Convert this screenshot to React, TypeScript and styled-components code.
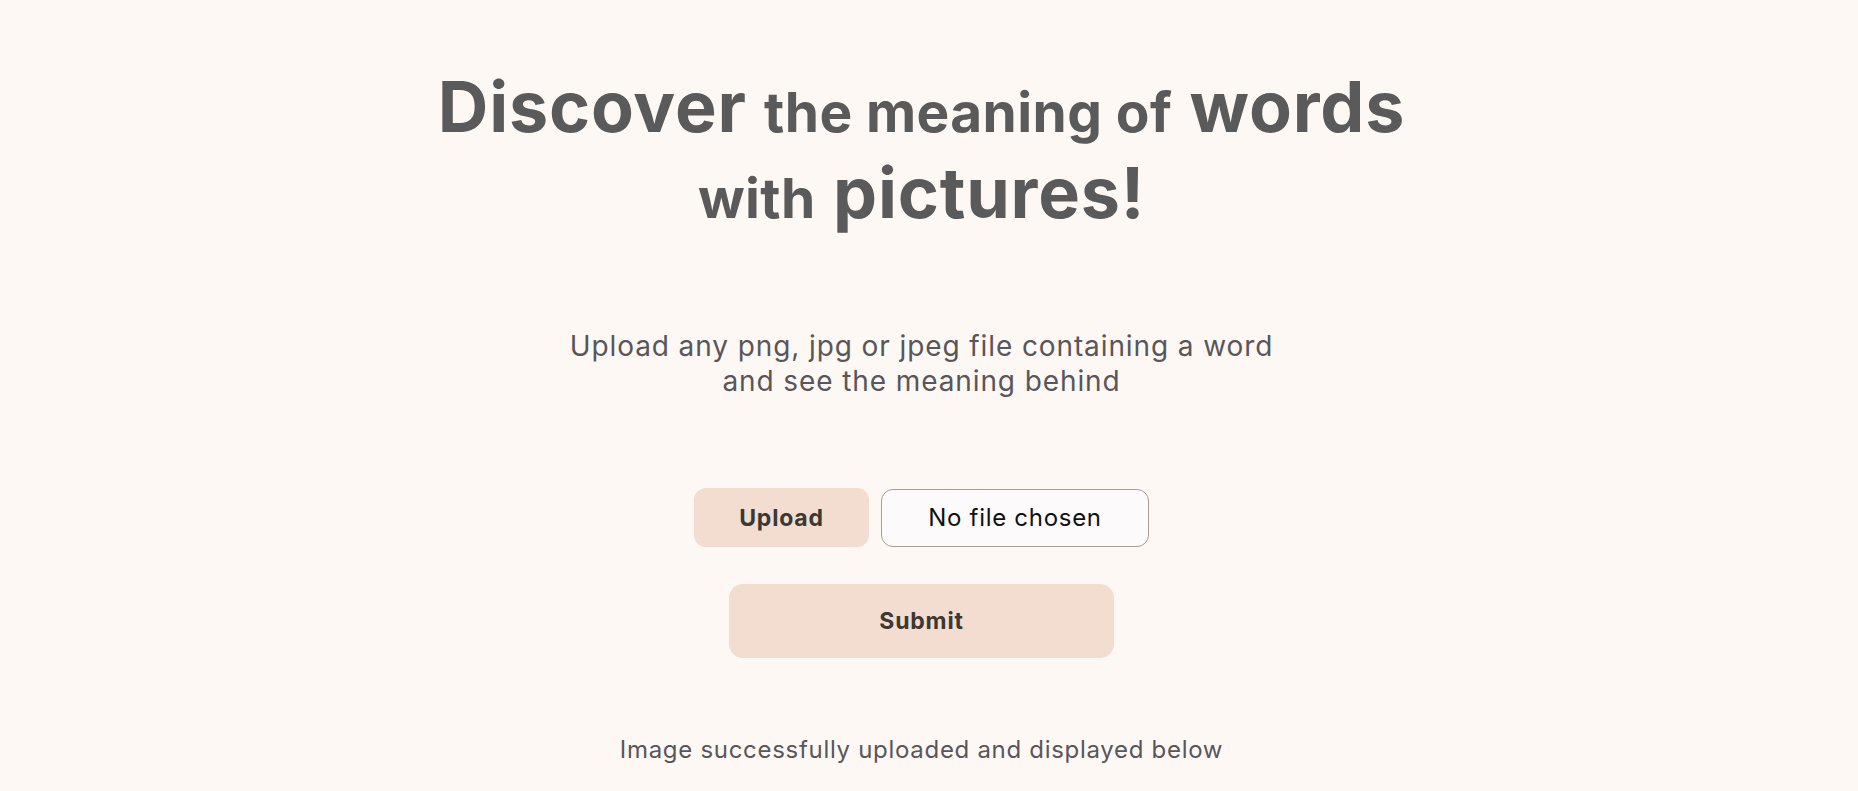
import React, { useState } from "react";
import styled, { createGlobalStyle } from "styled-components";

const GlobalStyle = createGlobalStyle`
  html, body {
    margin: 0;
    padding: 0;
    background: #fef8f4;
  }
  body {
    font-family: Inter, "Noto Sans", "DejaVu Sans", sans-serif;
    color: #5a5a5a;
  }
  * { box-sizing: border-box; }
`;

const Page = styled.main`
  min-height: 791px;
  padding: 64px 15px 40px 0;
  display: flex;
  flex-direction: column;
  align-items: center;
`;

const Title = styled.h1`
  margin: 0;
  font-size: 70px;
  line-height: 86px;
  font-weight: 700;
  letter-spacing: 0.8px;
  text-align: center;
  color: #5a5a5a;
`;

const Small = styled.span`
  font-size: 55px;
  line-height: 1;
  letter-spacing: 0.4px;
`;

const Subtitle = styled.p`
  margin: 93px 0 0;
  font-size: 28px;
  line-height: 35px;
  font-weight: 400;
  letter-spacing: 0.9px;
  text-align: center;
  color: #58565a;
`;

const UploadRow = styled.div`
  margin-top: 89px;
  display: flex;
  align-items: center;
  gap: 12px;
`;

const HiddenInput = styled.input`
  display: none;
`;

const UploadLabel = styled.label`
  width: 175px;
  height: 59px;
  border-radius: 12px;
  background: #f3ddd0;
  color: #3d3833;
  font-size: 23px;
  font-weight: 700;
  letter-spacing: 0.8px;
  display: flex;
  align-items: center;
  justify-content: center;
  cursor: pointer;
`;

const FileName = styled.div`
  width: 268px;
  height: 58px;
  border: 1px solid #a89c94;
  border-radius: 12px;
  background: #fcfafb;
  color: #111;
  font-size: 24px;
  letter-spacing: 0.7px;
  display: flex;
  align-items: center;
  justify-content: center;
`;

const SubmitButton = styled.button`
  margin-top: 37px;
  width: 385px;
  height: 74px;
  border: none;
  border-radius: 14px;
  background: #f3ddd0;
  color: #3d3833;
  font-family: inherit;
  font-size: 23px;
  font-weight: 700;
  letter-spacing: 0.8px;
  cursor: pointer;
`;

const Status = styled.p`
  margin: 77px 0 0;
  font-size: 24px;
  line-height: 30px;
  letter-spacing: 0.7px;
  color: #58565a;
  text-align: center;
`;

export default function App() {
  const [fileName, setFileName] = useState<string>("No file chosen");

  return (
    <>
      <GlobalStyle />
      <Page>
        <Title>
          Discover <Small>the meaning of</Small> words
          <br />
          <Small>with</Small> pictures!
        </Title>
        <Subtitle>
          Upload any png, jpg or jpeg file containing a word
          <br />
          and see the meaning behind
        </Subtitle>
        <UploadRow>
          <UploadLabel htmlFor="file-upload">Upload</UploadLabel>
          <HiddenInput
            id="file-upload"
            type="file"
            accept=".png,.jpg,.jpeg"
            onChange={(e) =>
              setFileName(e.target.files?.[0]?.name ?? "No file chosen")
            }
          />
          <FileName>{fileName}</FileName>
        </UploadRow>
        <SubmitButton type="button">Submit</SubmitButton>
        <Status>Image successfully uploaded and displayed below</Status>
      </Page>
    </>
  );
}
